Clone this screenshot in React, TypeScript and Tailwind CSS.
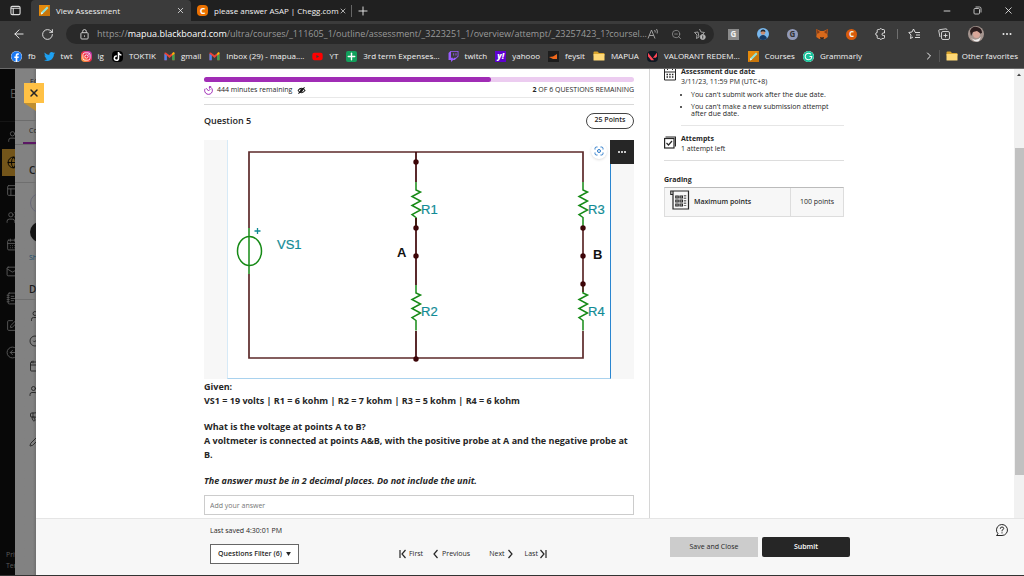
import type { ReactNode } from "react";
import {
  ArrowLeft,
  Calendar,
  CalendarDays,
  ChevronRight,
  CircleArrowLeft,
  CircleCheck,
  Globe,
  Mail,
  Megaphone,
  Minus,
  NotebookText,
  PanelsTopLeft,
  Pencil,
  Plus,
  RotateCw,
  SquarePen,
  User,
  Users,
  X,
  ZoomOut,
} from "lucide-react";
import { FaFacebook, FaInstagram, FaTiktok, FaTwitch, FaTwitter, FaYoutube } from "react-icons/fa";
import { SiGrammarly, SiValorant } from "react-icons/si";

function GmailIcon() {
  return (
    <svg viewBox="0 0 24 24" className="w-[11px] h-[11px]">
      <path d="M1 4v16h5V10l6 5 6-5v10h5V4l-3-1-8 6-8-6z" fill="#ea4335" />
      <path d="M1 6v14h5V10z" fill="#4285f4" />
      <path d="M23 6v14h-5V10z" fill="#34a853" />
      <path d="M18 5v5l5-4c0-3-2-4-4-2z" fill="#fbbc04" />
    </svg>
  );
}

function FolderIcon() {
  return (
    <svg viewBox="0 0 24 24" className="w-[12px] h-[12px] shrink-0">
      <path d="M1 5q0-2 2-2h6l3 3h9q2 0 2 2v3H1z" fill="#d9a52e" />
      <rect x="1" y="8" width="22" height="13" rx="1" fill="#ffd977" />
    </svg>
  );
}

function PencilTile() {
  return (
    <svg viewBox="0 0 22 22" className="w-[11px] h-[11px] shrink-0">
      <rect width="22" height="22" fill="#e58a0c" />
      <path d="M0 22 22 0v22z" fill="#c9760a" />
      <path d="m4 19 1-5L16 3l3 3L8 17z" fill="#8fe3dc" />
      <path d="m4 19 1-5 3 3z" fill="#fff" />
    </svg>
  );
}

function CheggIcon() {
  return (
    <span className="flex w-[11px] h-[11px] shrink-0 items-center justify-center rounded-sm bg-[#eb7100] text-[9px] leading-none font-bold text-white">
      C
    </span>
  );
}

const BOOKMARKS: { label: string; icon: ReactNode }[] = [
  { label: "fb", icon: <FaFacebook className="rounded-full bg-white text-[#1877f2]" size={11} /> },
  { label: "twt", icon: <FaTwitter className="text-[#1da1f2]" size={11} /> },
  {
    label: "ig",
    icon: (
      <span className="rounded-sm bg-linear-to-tr from-[#fdb13c] via-[#f0243f] to-[#b42bd0] p-px">
        <FaInstagram className="text-white" size={9} />
      </span>
    ),
  },
  {
    label: "TOKTIK",
    icon: (
      <span className="rounded-sm bg-black p-px">
        <FaTiktok className="text-white" size={9} />
      </span>
    ),
  },
  { label: "gmail", icon: <GmailIcon /> },
  { label: "Inbox (29) - mapua....", icon: <GmailIcon /> },
  { label: "YT", icon: <FaYoutube className="text-[#f00]" size={11} /> },
  {
    label: "3rd term Expenses...",
    icon: (
      <span className="rounded-xs bg-[#12a05c]">
        <Plus className="text-white" size={11} strokeWidth={3} />
      </span>
    ),
  },
  { label: "twitch", icon: <FaTwitch className="text-[#9a5cff]" size={11} /> },
  {
    label: "yahooo",
    icon: (
      <span className="w-[11px] h-[11px] bg-[#5f01d1] text-center text-[8px] leading-[10px] font-extrabold text-white italic">
        y!
      </span>
    ),
  },
  {
    label: "feysit",
    icon: (
      <svg viewBox="0 0 11 11" className="w-[11px] h-[11px]">
        <rect width="11" height="11" fill="#1d1d1d" />
        <path d="m1 6 4-.5L9 3v5H5z" fill="#f0681c" />
      </svg>
    ),
  },
  { label: "MAPUA", icon: <FolderIcon /> },
  {
    label: "VALORANT REDEM...",
    icon: (
      <span className="rounded-sm bg-[#0e1822] p-px">
        <SiValorant className="text-[#ff4655]" size={9} />
      </span>
    ),
  },
  { label: "Courses", icon: <PencilTile /> },
  { label: "Grammarly", icon: <SiGrammarly className="rounded-full bg-white text-[#15c39a]" size={11} /> },
];

function BrowserChrome() {
  return (
    <header className="shrink-0 border-b border-[#6a6a6a] bg-[#3b3b3b] font-['Open_Sans','Noto_Sans',sans-serif] text-[8px] text-[#f2f2f2]">
      <div className="flex h-[21px] items-center bg-[#202020]">
        <button aria-label="Tab actions" className="flex w-[31px] justify-center">
          <svg viewBox="0 0 12 12" className="w-[11px] h-[11px]" fill="none" stroke="#ddd" strokeWidth="1.2">
            <rect x="1" y="1.5" width="10" height="9" rx="1.5" />
            <path d="M1 3.500h10M3.500 3.500v7" />
          </svg>
        </button>
        <div className="flex h-full w-[160px] items-center gap-1.5 rounded-t bg-[#3b3b3b] pr-1.5 pl-2">
          <PencilTile />
          <span className="flex-1">View Assessment</span>
          <button aria-label="Close tab">
            <X size={9} />
          </button>
        </div>
        <div className="flex h-full w-[160px] items-center pr-1.5 pl-1.5">
          <CheggIcon />
          <span className="ml-1.5 flex-1 whitespace-nowrap">please answer ASAP | Chegg.com</span>
          <button aria-label="Close tab" className="shrink-0">
            <X size={8} />
          </button>
        </div>
        <span className="h-3 w-px bg-[#666]" />
        <button aria-label="New tab" className="ml-1">
          <Plus size={14} strokeWidth={1.5} />
        </button>
        <div className="ml-auto flex items-center gap-[21px] pr-2.5">
          <button aria-label="Minimize">
            <Minus size={10} />
          </button>
          <button aria-label="Restore">
            <svg viewBox="0 0 9 9" className="w-[9px] h-[9px]" fill="none" stroke="#ccc" strokeWidth="0.9">
              <rect x="1" y="2.5" width="5.5" height="5.5" rx="1" />
              <path d="M2.500 1h4Q8 1 8 2.500v4" />
            </svg>
          </button>
          <button aria-label="Close window">
            <X size={11} strokeWidth={1.8} />
          </button>
        </div>
      </div>

      <div className="flex h-[25px] items-center pt-px">
        <button aria-label="Back" className="ml-3">
          <ArrowLeft size={14} strokeWidth={1.6} />
        </button>
        <button aria-label="Reload" className="ml-[15px]">
          <RotateCw size={13} strokeWidth={1.6} />
        </button>
        <div className="ml-3 flex h-5 min-w-0 flex-1 items-center rounded-full bg-[#292929] pr-2.5 pl-3.5 text-[#9a9a9a]">
          <svg viewBox="0 0 10 12" className="w-[9px] h-[11px] shrink-0" fill="none" stroke="#ddd">
            <rect x="1" y="4" width="8" height="7" rx="1" />
            <path d="M3 4V2.500a2 2 0 0 1 4 0V4M5 7v1.500" />
          </svg>
          <p className="ml-2 flex-1 text-[9px] whitespace-nowrap">
            https://<span className="text-white">mapua.blackboard.com</span>
            /ultra/courses/_111605_1/outline/assessment/_3223251_1/overview/attempt/_23257423_1?coursel...
          </p>
          <button aria-label="Read aloud">
            <svg viewBox="0 0 12 12" className="w-3 h-3" fill="none" stroke="#aaa" strokeWidth="0.9">
              <path d="M1 10.500 4.500 2 8 10.500M2.200 7.500h4.600M7.500 2q1 1 .6 2.500M9.500 1q1.500 2 .6 4.500" />
            </svg>
          </button>
          <button aria-label="Zoom" className="ml-3">
            <ZoomOut size={11} strokeWidth={1.6} />
          </button>
          <button aria-label="Add to favorites" className="ml-3">
            <svg viewBox="0 0 24 24" className="w-3 h-3" fill="none" stroke="#aaa" strokeWidth="1.8">
              <path d="m11 2 3 6 7 1-5 5m-6 4-5 3 1-7-5-5 7-1z" />
              <circle cx="17.500" cy="18" r="5" fill="#bbb" />
              <path d="M17.500 15v6" stroke="#292929" />
            </svg>
          </button>
        </div>
        <div className="ml-3.5 flex items-center gap-[18px]">
          <span className="flex w-[11px] h-[11px] items-center justify-center bg-[#8b8b8b] font-bold">G</span>
          <svg viewBox="0 0 12 12" className="w-3 h-3">
            <circle cx="6" cy="6" r="6" fill="#79b8ee" />
            <path d="M2 10.500Q3 7 6 7t4 3.500Q6 13.500 2 10.500" fill="#163a64" />
            <circle cx="6" cy="4.500" r="2.300" fill="#c98d70" />
            <path d="M3.500 4q0-3 3-2.500 2 .2 2 2.500L6 3.200z" fill="#262626" />
          </svg>
          <span className="flex w-[11px] h-[11px] items-center justify-center rounded-full bg-[#929ab8] font-bold text-[#333]">
            G
          </span>
          <svg viewBox="0 0 12 12" className="w-3 h-3">
            <path d="m0 1 4.500 2h3L12 1l-.6 5 .3 3-3 2h-5.400l-3-2 .3-3z" fill="#d8691b" />
            <path d="m0 1 4 3-2.500 2zM12 1 8 4l2.500 2z" fill="#8a3f17" />
            <path d="m4 9 2 .5L8 9l-.5 2h-3z" fill="#33261f" />
          </svg>
          <span className="flex w-[11px] h-[11px] items-center justify-center rounded-full bg-[#d95b0b] font-bold">C</span>
          <svg viewBox="0 0 12 12" className="w-3 h-3" fill="none" stroke="#eee" strokeWidth="0.9">
            <path d="M9.500 5V2.500q0-1-1-1H7a1.400 1.400 0 0 0-2.600 0H3.200q-1 0-1 1V4.500a1.500 1.500 0 0 0 0 3v2q0 1 1 1h1.300a1.400 1.400 0 0 0 2.600 0h1.400q1 0 1-1V7.500H8.300a1.200 1.200 0 0 1 0-2.500z" />
          </svg>
        </div>
        <span className="ml-2.5 h-2.5 w-px bg-[#707070]" />
        <div className="ml-2.5 flex items-center gap-[18px] pr-3">
          <button aria-label="Favorites">
            <svg viewBox="0 0 12 12" className="w-3 h-3" fill="none" stroke="#eee" strokeWidth="0.9">
              <path d="M7 4 5.500 1 4 4 .8 4.500 3 7l-.5 3.500L5 9M7 4.500h5M8 7h4M7 9.500h5" />
            </svg>
          </button>
          <button aria-label="Collections">
            <svg viewBox="0 0 12 12" className="w-3 h-3" fill="none" stroke="#ddd" strokeWidth="0.9">
              <rect x="3.500" y="3.500" width="8" height="8" rx="1.500" />
              <path d="M2 9 .8 3Q.5 2 1.500 1.700L8 .8q1 0 1 1.200M7.500 5.500v4M5.500 7.500h4" />
            </svg>
          </button>
          <svg viewBox="0 0 16 16" className="w-4 h-4">
            <circle cx="8" cy="8" r="8" fill="#a5958f" />
            <path d="M2 5q2-5 7-4 5 1 5 6l-3 1-6-2-2 4z" fill="#2b1d1e" />
            <ellipse cx="8.500" cy="8" rx="3.500" ry="4" fill="#d8a699" />
            <path d="M5 6q0-3 4-3t3 4L9 5z" fill="#2b1d1e" />
            <path d="M3 12q5 4 10-1l-2 4q-4 2-8-3" fill="#eee" />
          </svg>
          <button aria-label="Settings and more">
            <svg viewBox="0 0 10 4" className="w-[10px] h-1" fill="#eee">
              <circle cx="1.500" cy="2" r="1" />
              <circle cx="5" cy="2" r="1" />
              <circle cx="8.500" cy="2" r="1" />
            </svg>
          </button>
        </div>
      </div>

      <nav className="flex h-[22px] items-center pr-1.5 pb-0.5 pl-[11px]">
        <div className="flex items-center gap-2 whitespace-nowrap">
          {BOOKMARKS.map((b) => (
            <a key={b.label} href="#" className="flex items-center gap-1.5">
              {b.icon}
              {b.label}
            </a>
          ))}
        </div>
        <button aria-label="More bookmarks" className="ml-auto">
          <ChevronRight size={12} />
        </button>
        <span className="mr-1.5 ml-1 h-3 w-px bg-[#555]" />
        <a href="#" className="flex items-center gap-1 whitespace-nowrap">
          <FolderIcon />
          Other favorites
        </a>
      </nav>
    </header>
  );
}

const NAV_ICONS = [User, Globe, PanelsTopLeft, Users, CalendarDays, Mail, NotebookText, SquarePen, CircleArrowLeft];
const COURSE_ICONS = [User, CircleCheck, Calendar, Users, Megaphone, Pencil];

// What is left of the course page under the open assessment panel
function DimmedPage() {
  return (
    <div className="flex w-9 shrink-0 overflow-hidden">
      <div className="flex w-[15px] shrink-0 flex-col overflow-hidden bg-[#080808] text-[7px] text-[#5a5a5a]">
        <div className="h-[53px] shrink-0 border-b border-[#151515] pt-[17px] pl-2.5 text-[12px] leading-4">B</div>
        <div className="flex flex-col">
          {NAV_ICONS.map((Icon, i) => (
            <div key={i} className={i === 1 ? "ml-0.5 h-[27px] bg-[#73551a] pt-[7px] pl-[5px] text-black" : "h-[27px] pt-2 pl-1.5"}>
              <Icon size={13} strokeWidth={1.7} />
            </div>
          ))}
        </div>
        <div className="mt-auto pb-1 pl-1.5 leading-[11px]">
          <p>Privacy</p>
          <p>Terms</p>
        </div>
      </div>
      <div className="w-[21px] shrink-0 overflow-hidden bg-linear-to-r from-[#828282] from-85% to-[#707070] text-[8px] whitespace-nowrap text-[#1c1c1c]">
        <div className="h-[52px] border-b border-[#6c6c6c] pt-2 pl-[15px] text-[7px]">EC</div>
        <div className="flex h-6 items-center border-b border-[#6c6c6c]">
          <span className="ml-2 flex h-full items-center border-b-2 border-[#5b1764] pr-4 pl-1.5 text-[7px]">Content</span>
        </div>
        <div className="h-[38px] border-b border-[#6f6f6f] pt-[17px] pl-3.5 text-[10px] leading-4 font-semibold">Course</div>
        <div className="ml-[15px] mt-2.5 w-5 h-5 rounded-full border border-[#686878]" />
        <div className="ml-[15px] mt-[9px] w-5 h-5 rounded-full bg-[#151515]" />
        <p className="mt-2.5 pl-3.5 text-[7px] leading-[11px] text-[#1a506c]">Show</p>
        <div className="mt-[18px] h-[19px] border-b border-[#6f6f6f] pl-3.5 text-[10px] leading-4 font-semibold">Details</div>
        <div className="flex flex-col gap-[13px] pt-2.5 pl-3.5">
          {COURSE_ICONS.map((Icon, i) => (
            <Icon key={i} size={12} strokeWidth={1.7} />
          ))}
        </div>
      </div>
    </div>
  );
}

function Dot({ x, y }: { x: number; y: number }) {
  return <circle cx={x} cy={y} r={2.7} fill="#3d0508" />;
}

function Resistor({ x, y }: { x: number; y: number }) {
  return (
    <path
      transform={`translate(${x} ${y})`}
      d="M0-8V0l4.500 2-8.500 4.500 8.500 4.500-8.500 4.500 8.500 4.500-8.500 4.500 4 3v10"
      fill="none"
      stroke="#168a16"
      strokeWidth="1.500"
    />
  );
}

function Circuit() {
  return (
    <svg viewBox="0 0 382 238" className="w-full font-['Liberation_Sans',Arial,sans-serif] text-[13px]" role="img" aria-label="Bridge circuit">
      <Resistor x={188} y={50} />
      <Resistor x={188} y={153} />
      <Resistor x={355} y={50} />
      <Resistor x={355} y={153} />
      <g fill="none" stroke="#5c2a2a" strokeWidth="1.700">
        <path d="M21 88V12H355V42M21 134V218H355V191M355 86V152" />
        <path d="M188 12V42M188 78V145M188 191V218" stroke="#3d0508" />
      </g>
      <g fill="none" stroke="#168a16" strokeWidth="1.500">
        <ellipse cx="21.500" cy="111" rx="12" ry="14.500" />
        <path d="M21 88V134" />
      </g>
      <path d="M26.500 91h6M29.500 88v6" stroke="#128b95" strokeWidth="1.300" />
      <Dot x={188} y={22} />
      <Dot x={188} y={88} />
      <Dot x={188} y={116} />
      <Dot x={188} y={219} />
      <Dot x={355} y={88} />
      <Dot x={355} y={116} />
      <Dot x={355} y={144} />
      <g fill="#128b95" stroke="#128b95" strokeWidth="0.200">
        <text x="49" y="109">VS1</text>
        <text x="193" y="74">R1</text>
        <text x="193" y="176">R2</text>
        <text x="360" y="74">R3</text>
        <text x="360" y="176">R4</text>
      </g>
      <g fill="#111" fontWeight="bold">
        <text x="169" y="117">A</text>
        <text x="365" y="119">B</text>
      </g>
    </svg>
  );
}

function Question() {
  return (
    <section className="min-w-0 flex-1 overflow-hidden border-r border-[#d6d6d6] pt-2 pr-[15px] pl-[168px]">
      <div className="h-[5px] rounded-full bg-[#ecccf0]">
        <div className="h-full w-2/3 rounded-full bg-[#a02cb5]" />
      </div>
      <div className="flex h-4 items-center border-b border-[#e8e8e8] pt-px text-[7px]">
        <svg viewBox="0 0 10 10" className="w-[9px] h-[9px]" fill="none" stroke="#a02cb5" strokeWidth="1.100">
          <path d="M6 .8A4.300 4.300 0 1 1 1.200 3M5 5.500 2.500 2.500M5 5.500l2-2M6 3V.8h2" />
        </svg>
        <span className="ml-1">444 minutes remaining</span>
        <button aria-label="Hide time" className="ml-[5px]">
          <svg viewBox="0 0 10 8" className="w-[9px] h-[7px]" fill="none" stroke="#111" strokeWidth="1.200">
            <path d="M1 4q4-5 8 0-4 5-8 0M1.500 7.500l7-7" />
            <circle cx="5" cy="4" r="1" />
          </svg>
        </button>
        <span className="ml-auto">
          <b>2</b> OF 6 QUESTIONS REMAINING
        </span>
      </div>
      <hr className="mt-1.5 border-[#d9d9d9]" />
      <div className="mt-[7px] flex h-[17px] items-center justify-between">
        <h1 className="text-[9px] font-semibold">Question 5</h1>
        <span className="flex h-4 w-12 items-center justify-center rounded-full border border-[#444] text-[7px] font-semibold">
          25 Points
        </span>
      </div>

      <div className="relative mt-[11px] bg-[#f7f7f7] pr-[23px] pl-[23px]">
        <div className="flex border-r border-b border-l border-r-[#2a86d0] border-b-[#a9d2ee] border-l-[#d7eaf7] bg-white">
          <Circuit />
        </div>
        <button
          aria-label="Visual search"
          className="absolute top-[3px] right-[27px] flex w-4 h-4 items-center justify-center rounded-full bg-white shadow"
        >
          <svg viewBox="0 0 10 10" className="w-[10px] h-[10px]" fill="none" stroke="#2878c8" strokeWidth="1">
            <path d="M1 3.500V2.500Q1 1 2.500 1h1M6.500 1h1Q9 1 9 2.500v1M9 6.500v1Q9 9 7.500 9h-1M3.500 9h-1Q1 9 1 7.500v-1" />
            <circle cx="5" cy="5" r="1.500" />
          </svg>
        </button>
        <button
          aria-label="More options"
          className="absolute top-0 right-0 flex w-6 h-6 items-center justify-center bg-[#262626] text-white"
        >
          <svg viewBox="0 0 10 4" className="w-[10px] h-1" fill="currentColor">
            <circle cx="2" cy="2" r="1" />
            <circle cx="5" cy="2" r="1" />
            <circle cx="8" cy="2" r="1" />
          </svg>
        </button>
      </div>

      <div className="pt-px text-[9px] leading-[14px] font-bold">
        <p>Given:</p>
        <p>VS1 = 19 volts | R1 = 6 kohm | R2 = 7 kohm | R3 = 5 kohm | R4 = 6 kohm</p>
        <p className="mt-3">What is the voltage at points A to B?</p>
        <p>A voltmeter is connected at points A&amp;B, with the positive probe at A and the negative probe at B.</p>
        <p className="mt-3 italic">The answer must be in 2 decimal places. Do not include the unit.</p>
      </div>
      <input
        aria-label="Your answer"
        placeholder="Add your answer"
        className="mt-[7px] block h-5 w-full border border-[#ccc] px-[5px] text-[7px] placeholder:text-[#777]"
      />
    </section>
  );
}

function Details() {
  return (
    <aside className="w-[364px] shrink-0 overflow-hidden pl-3.5 text-[7px] leading-[10px]">
      <div className="max-w-[180px]">
        <div className="-mt-0.5 flex gap-[5px]">
          <svg viewBox="0 0 12 14" className="w-3 h-3.5 shrink-0" fill="none" stroke="#262626">
            <path d="M.5 1.500h11v11.500H.5zM.5 5h11" />
            <path d="M2.500 7.500h7M2.500 10h7" strokeDasharray="1.500 1.200" strokeWidth="1.300" />
            <path d="M3.500 0v3M8.500 0v3" />
          </svg>
          <div className="flex-1 border-b border-[#e6e6e6] pb-2">
            <h2 className="font-bold">Assessment due date</h2>
            <p>3/11/23, 11:59 PM (UTC+8)</p>
            <ul className="mt-[3px] list-disc pl-2.5 leading-[7px]">
              <li className="py-px">You can't submit work after the due date.</li>
              <li className="mt-1">You can't make a new submission attempt after due date.</li>
            </ul>
          </div>
        </div>
        <div className="mt-2 flex gap-[5px] border-b border-[#ddd] pb-1.5">
          <svg viewBox="0 0 12 13" className="mt-0.5 w-3 h-[13px] shrink-0" fill="none" stroke="#262626" strokeWidth="1.200">
            <rect x=".6" y="2.500" width="9.400" height="9.500" />
            <path d="M1.500 1h10v9.500M2.500 7l2 2 3.500-4" />
          </svg>
          <div>
            <h2 className="font-bold">Attempts</h2>
            <p>1 attempt left</p>
          </div>
        </div>
        <h2 className="mt-3.5 font-bold">Grading</h2>
        <div className="mt-0.5 flex h-[30px] items-center border border-t-[#bbb] border-[#ddd] bg-[#f7f7f7]">
          <svg viewBox="0 0 20 20" className="mb-1 ml-[5px] w-5 h-5" fill="none" stroke="#262626" strokeWidth="1.200">
            <path d="M3 4.500H.8V1H18.500V19H3V1" />
            <path d="M5.800 6h2.400v2H5.800zM5.800 10h2.400v2H5.800zM5.800 14h2.400v2H5.800zM10 6h2.400v2H10zM10 10h2.400v2H10zM10 14h2.400v2H10z" />
            <path d="M15 5v11" strokeWidth="2.500" stroke="#777" strokeDasharray="1.500 1" />
          </svg>
          <span className="ml-1 flex-1 font-semibold">Maximum points</span>
          <span className="flex h-full w-[53px] items-center justify-center border-l border-[#ddd]">100 points</span>
        </div>
      </div>
    </aside>
  );
}

function Scrollbar() {
  return (
    <div className="flex w-2.5 shrink-0 flex-col items-center bg-[#f1f1f1]">
      <svg viewBox="0 0 10 10" className="mt-px w-2.5 h-2.5">
        <path d="m3 6 2-2.500L7 6z" fill="#444" />
      </svg>
      <div className="mt-[68px] h-[327px] w-[9px] bg-[#c1c1c1]" />
    </div>
  );
}

function Bracket({ flip, bar }: { flip?: boolean; bar?: boolean }) {
  return (
    <svg viewBox="0 0 8 10" className={flip ? "w-2 h-2.5 rotate-180" : "w-2 h-2.5"} fill="none" stroke="#262626" strokeWidth="1.200">
      <path d="M6.500 1 3 5l3.500 4" />
      {bar && <path d="M1 1v8" />}
    </svg>
  );
}

function Footer() {
  return (
    <footer className="flex h-[57px] shrink-0 border-t border-[#e5e5e5] bg-[#f7f7f7] text-[7px]">
      <div className="min-w-0 flex-1 pt-[7px] pl-[174px]">
        <p className="leading-[10px]">Last saved 4:30:01 PM</p>
        <div className="mt-2 flex items-center">
          <button className="flex h-5 w-[89px] items-center justify-center gap-1 border border-[#666] bg-white font-semibold">
            Questions Filter (6)
            <svg viewBox="0 0 6 5" className="w-[5px] h-1">
              <path d="M0 0h6L3 5z" fill="#262626" />
            </svg>
          </button>
          <nav className="ml-[100px] flex items-center">
            <button className="flex items-center gap-0.5">
              <Bracket bar />
              First
            </button>
            <button className="ml-2 flex items-center gap-[3px]">
              <Bracket />
              Previous
            </button>
            <button className="ml-[19px] flex items-center gap-0.5">
              Next
              <Bracket flip />
            </button>
            <button className="ml-2.5 flex items-center gap-px">
              Last
              <Bracket flip bar />
            </button>
          </nav>
        </div>
      </div>
      <div className="flex w-[374px] shrink-0 items-start pr-4 pl-5">
        <button className="mt-[18px] h-5 w-[88px] bg-[#ccc]">Save and Close</button>
        <button className="mt-[18px] ml-1 h-5 w-[88px] rounded-xs bg-[#262626] font-semibold text-white">Submit</button>
        <button aria-label="Help" className="mt-[5px] ml-auto">
          <svg viewBox="0 0 12 12" className="w-3 h-3" fill="none" stroke="#262626" strokeWidth="1">
            <path d="M.5 11.500h5.500A5.500 5.500 0 1 0 2 9.800z" />
            <path d="M4.300 4.800q0-1.800 1.700-1.800t1.700 1.500Q7.700 5.500 6 6.300v1M6 8.300v1.100" />
          </svg>
        </button>
      </div>
    </footer>
  );
}

export default function App() {
  return (
    <div className="flex h-screen flex-col overflow-hidden border-b border-[#333]">
      <BrowserChrome />
      <div className="flex min-h-0 flex-1 font-['Open_Sans','Noto_Sans',sans-serif] text-[#262626]">
        <DimmedPage />
        <main className="relative flex min-w-0 flex-1 flex-col bg-white">
          <div className="absolute top-3.5 -left-3">
            <button aria-label="Close" className="flex w-5 h-5 items-center justify-center bg-[#ffc145]">
              <X size={12} strokeWidth={3} />
            </button>
            <svg viewBox="0 0 12 8" className="w-3 h-2">
              <path d="M0 0h12v8z" fill="#c08f30" />
            </svg>
          </div>
          <div className="flex min-h-0 flex-1">
            <Question />
            <Details />
            <Scrollbar />
          </div>
          <Footer />
        </main>
      </div>
    </div>
  );
}
